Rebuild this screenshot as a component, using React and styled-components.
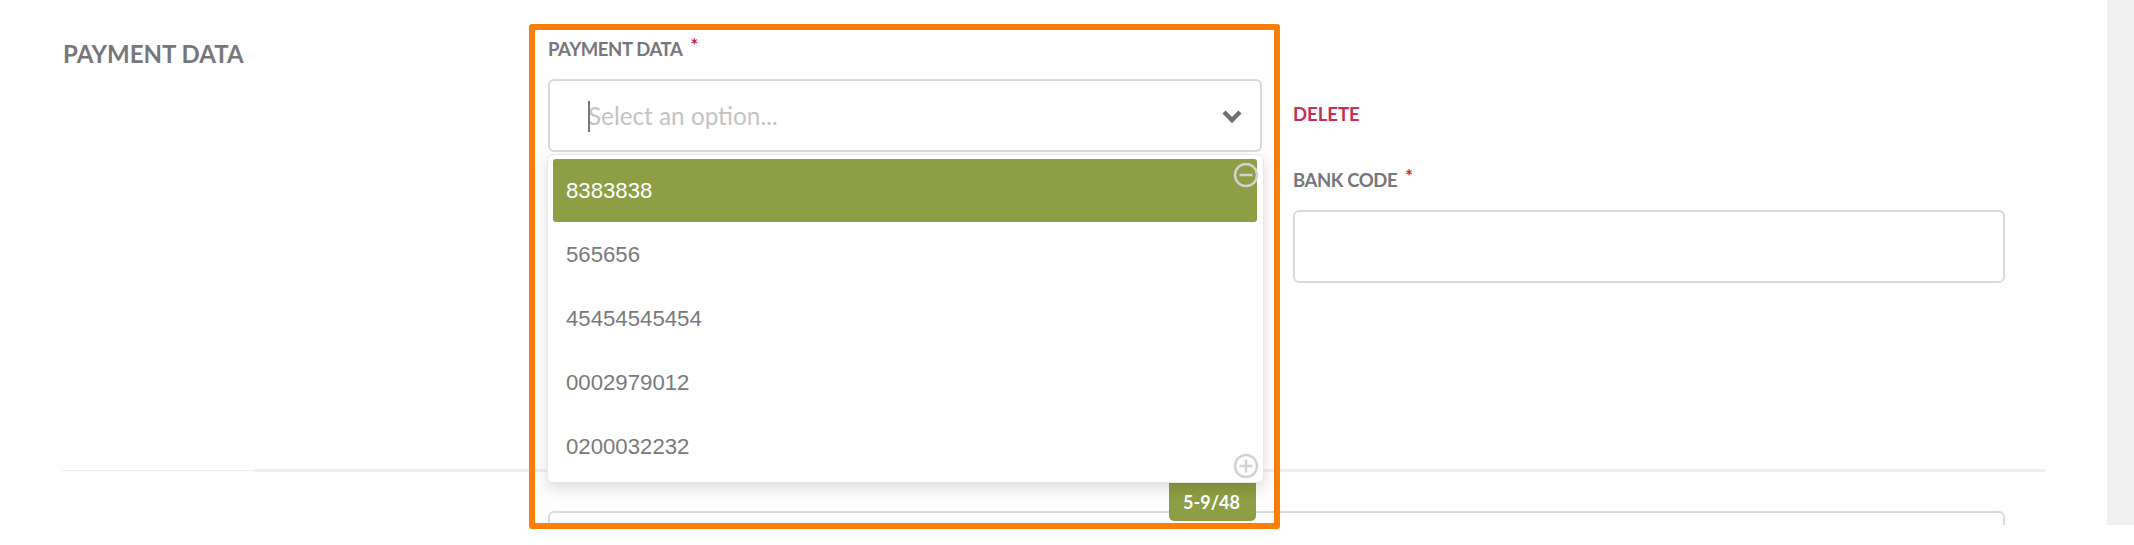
import React from "react";
import styled, { createGlobalStyle } from "styled-components";

const Global = createGlobalStyle`
  html, body { margin: 0; padding: 0; background: #ffffff; }
  * { box-sizing: border-box; }
  body { font-family: "Lato", "Noto Sans", sans-serif; }
`;

const Page = styled.div`
  position: relative;
  width: 2134px;
  height: 545px;
  overflow: hidden;
`;

const Frame = styled.div`
  display: flex;
  height: 525px;
  overflow: hidden;
  background: #fefefe;
`;

const Main = styled.main`
  flex: 1;
  padding: 40px 62px 0;
`;

const Scrollbar = styled.div`
  width: 27px;
  background: #f0f0f0;
`;

const Section = styled.section`
  display: grid;
  grid-template-columns: 455px 714px 712px;
  column-gap: 31px;
  height: 429px;
`;

const SectionTitle = styled.h2`
  margin: 0;
  padding-left: 1px;
  font-size: 24px;
  line-height: 28px;
  font-weight: 700;
  color: #77777a;
  white-space: nowrap;
`;

const Column = styled.div`
  display: flex;
  flex-direction: column;
`;

const FieldLabel = styled.label`
  display: block;
  height: 20px;
  margin-bottom: 19px;
  font-size: 18.5px;
  line-height: 18px;
  font-weight: 700;
  letter-spacing: -0.4px;
  color: #76767c;
  white-space: nowrap;
`;

const Star = styled.span`
  position: relative;
  top: -4px;
  margin-left: 8px;
  font-size: 18px;
  line-height: 0;
  color: #c0284e;
`;

const DeleteLink = styled.a`
  display: block;
  height: 20px;
  margin: 65px 0 46px;
  font-size: 18.5px;
  line-height: 18px;
  font-weight: 700;
  color: #c42f58;
`;

const TextBox = styled.div`
  height: ${(p) => p.$height}px;
  border: 2px solid #dadada;
  border-radius: 6px;
  background: #fff;
`;

const SelectWrap = styled.div`
  position: relative;
`;

const SelectBox = styled.div`
  position: relative;
  display: flex;
  align-items: center;
  height: 73px;
  padding: 0 18px 0 38px;
  border: 2px solid #dadada;
  border-radius: 6px;
  background: #fff;
`;

const Placeholder = styled.span`
  flex: 1;
  font-size: 24.3px;
  line-height: 32px;
  color: #c3c3c3;
  &::before {
    content: "";
    position: absolute;
    left: 38px;
    top: 20px;
    width: 2px;
    height: 31px;
    background: #77777c;
  }
`;

const Chevron = styled.svg`
  width: 20px;
  height: 14px;
  fill: none;
  stroke: #6f6f6f;
  stroke-width: 4.5;
`;

const Menu = styled.div`
  position: absolute;
  z-index: 2;
  top: 75px;
  left: -1px;
  right: -2px;
  height: 329px;
  padding: 4px 6px 0 5px;
  border: 1px solid #e9e9e9;
  border-radius: 6px;
  background: #fff;
  box-shadow: 0 6px 14px rgba(0, 0, 0, 0.13);
`;

const Option = styled.div`
  display: flex;
  align-items: center;
  height: 63px;
  margin-bottom: 1px;
  padding-left: 13px;
  border-radius: 3px;
  font-family: "Liberation Sans", Arial, sans-serif;
  font-size: 22.2px;
  color: ${(p) => (p.$active ? "#fff" : "#7a7a7c")};
  background: ${(p) => (p.$active ? "#8d9e44" : "transparent")};
`;

const ScrollIcon = styled.svg`
  position: absolute;
  right: 4px;
  width: 26px;
  height: 26px;
  fill: none;
  stroke: #d2d2d2;
  stroke-width: 2.5;
  ${(p) => (p.$top ? "top: 7px;" : "bottom: 3px;")}
`;

const PageBadge = styled.div`
  position: absolute;
  z-index: 1;
  top: 404px;
  right: 6px;
  display: flex;
  align-items: center;
  justify-content: center;
  width: 87px;
  height: 38px;
  padding-right: 2px;
  border-radius: 0 0 5px 5px;
  background: #8d9e44;
  color: #fff;
  font-size: 18px;
  font-weight: 700;
`;

const Divider = styled.div`
  display: flex;
  align-items: center;
  height: 3px;
`;

const ThinRule = styled.div`
  width: 193px;
  height: 1px;
  background: #eeeeee;
`;

const ThickRule = styled.div`
  flex: 1;
  height: 3px;
  background: #efefef;
`;

const NextRow = styled.div`
  width: 1457px;
  margin: 39px 0 0 486px;
`;

const Highlight = styled.div`
  position: absolute;
  z-index: 3;
  top: 24px;
  left: 529px;
  width: 751px;
  height: 505px;
  border: 6px solid #fd7e07;
  border-radius: 3px;
  pointer-events: none;
`;

const options = ["565656", "45454545454", "0002979012", "0200032232"];

export default function App() {
  return (
    <Page>
      <Global />
      <Frame>
        <Main>
          <Section>
            <SectionTitle>PAYMENT DATA</SectionTitle>
            <Column>
              <FieldLabel>
                PAYMENT DATA<Star>*</Star>
              </FieldLabel>
              <SelectWrap>
                <SelectBox>
                  <Placeholder>Select an option...</Placeholder>
                  <Chevron viewBox="0 0 20 14">
                    <polyline points="2,3 10,11 18,3" />
                  </Chevron>
                </SelectBox>
                <Menu>
                  <Option $active>8383838</Option>
                  {options.map((o) => (
                    <Option key={o}>{o}</Option>
                  ))}
                  <ScrollIcon $top viewBox="0 0 26 26">
                    <circle cx="13" cy="13" r="11" />
                    <line x1="6.5" y1="13" x2="19.5" y2="13" />
                  </ScrollIcon>
                  <ScrollIcon viewBox="0 0 26 26">
                    <circle cx="13" cy="13" r="11" />
                    <line x1="6.5" y1="13" x2="19.5" y2="13" />
                    <line x1="13" y1="6.5" x2="13" y2="19.5" />
                  </ScrollIcon>
                </Menu>
                <PageBadge>5-9/48</PageBadge>
              </SelectWrap>
            </Column>
            <Column>
              <DeleteLink>DELETE</DeleteLink>
              <FieldLabel>
                BANK CODE<Star>*</Star>
              </FieldLabel>
              <TextBox $height={73} />
            </Column>
          </Section>
          <Divider>
            <ThinRule />
            <ThickRule />
          </Divider>
          <NextRow>
            <TextBox $height={73} />
          </NextRow>
        </Main>
        <Scrollbar />
      </Frame>
      <Highlight />
    </Page>
  );
}
